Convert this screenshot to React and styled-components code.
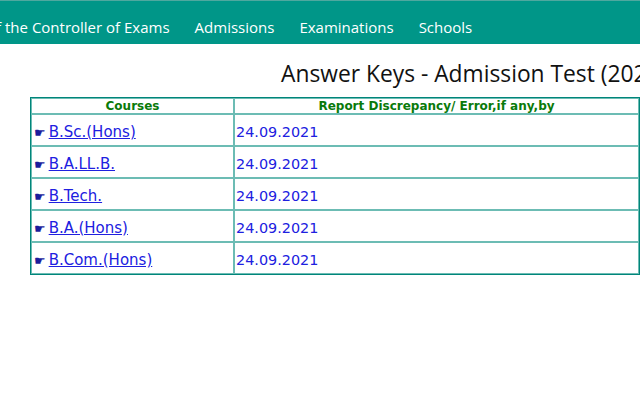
import React from "react";
import styled, { createGlobalStyle } from "styled-components";

const Global = createGlobalStyle`
  html, body { margin: 0; padding: 0; background: #fff; overflow: hidden; }
  body { width: 640px; height: 420px; }
`;

const Page = styled.div`
  width: 640px;
  height: 420px;
  overflow: hidden;
`;

const NavBar = styled.nav`
  height: 44px;
  background: #009688;
  border-top: 1px solid #4fa89f;
  box-sizing: border-box;
  display: flex;
  align-items: center;
  white-space: nowrap;
  overflow: hidden;
`;

const NavList = styled.div`
  display: flex;
  gap: 25px;
  margin-left: -58px;
  padding-top: 9px;
`;

const NavItem = styled.a`
  font-family: "Open Sans", "Noto Sans", sans-serif;
  font-size: 15px;
  color: #fff;
  text-decoration: none;
`;

const Title = styled.h2`
  margin: 14px 0 0 281px;
  font-family: "Open Sans", "Noto Sans", sans-serif;
  font-weight: 400;
  font-size: 22.8px;
  line-height: 32px;
  color: #111;
  white-space: nowrap;
`;

const Table = styled.table`
  margin: 7px 0 0 30px;
  width: 610px;
  border: 1px solid #00857a;
  border-collapse: separate;
  border-spacing: 0;
  font-family: "DejaVu Sans", Verdana, sans-serif;
`;

const Th = styled.th`
  border: 1px solid #6cbcb4;
  padding: 0;
  height: 14px;
  font-size: 12px;
  line-height: 14px;
  font-weight: bold;
  color: #0a7a0a;
  text-align: center;
  width: ${(p) => p.$w || "auto"};
`;

const Td = styled.td`
  border: 1px solid #6cbcb4;
  padding: 3px 0 0 1px;
  height: 27px;
  font-size: 14.4px;
  color: #2020e0;
  text-align: left;
  vertical-align: middle;
`;

const Hand = styled.span`
  font-family: "DejaVu Sans", sans-serif;
  font-size: 13px;
  color: #1c1c9c;
  margin: 0 3px 0 1px;
`;

const CourseLink = styled.a`
  font-size: 15px;
  color: #2020e0;
  text-decoration: underline;
`;

const rows = ["B.Sc.(Hons)", "B.A.LL.B.", "B.Tech.", "B.A.(Hons)", "B.Com.(Hons)"];

export default function App() {
  return (
    <Page>
      <Global />
      <NavBar>
        <NavList>
          <NavItem>Office of the Controller of Exams</NavItem>
          <NavItem>Admissions</NavItem>
          <NavItem>Examinations</NavItem>
          <NavItem>Schools</NavItem>
        </NavList>
      </NavBar>
      <Title>Answer Keys - Admission Test (2021-22)</Title>
      <Table>
        <thead>
          <tr>
            <Th $w="201px">Courses</Th>
            <Th>Report Discrepancy/ Error,if any,by</Th>
          </tr>
        </thead>
        <tbody>
          {rows.map((r) => (
            <tr key={r}>
              <Td>
                <Hand>☛</Hand>
                <CourseLink href="#">{r}</CourseLink>
              </Td>
              <Td>24.09.2021</Td>
            </tr>
          ))}
        </tbody>
      </Table>
    </Page>
  );
}
